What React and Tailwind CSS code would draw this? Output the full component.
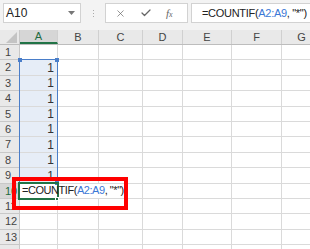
import { X, Check } from "lucide-react";

const cols = [
  { key: "A", w: "w-[38px]" },
  { key: "B", w: "w-[41px]" },
  { key: "C", w: "w-[44px]" },
  { key: "D", w: "w-[40px]" },
  { key: "E", w: "w-[49px]" },
  { key: "F", w: "w-[50px]" },
  { key: "G", w: "w-[40px]" },
];

const rows = [
  { n: 1, h: "h-[15px]" },
  { n: 2, h: "h-[16px]" },
  { n: 3, h: "h-[15px]" },
  { n: 4, h: "h-[16px]" },
  { n: 5, h: "h-[15px]" },
  { n: 6, h: "h-[15px]" },
  { n: 7, h: "h-[16px]" },
  { n: 8, h: "h-[15px]" },
  { n: 9, h: "h-[16px]" },
  { n: 10, h: "h-[15px]" },
  { n: 11, h: "h-[15px]" },
  { n: 12, h: "h-[16px]" },
  { n: 13, h: "h-[15px]" },
  { n: 14, h: "h-[15px]" },
];

function Formula({ className }) {
  return (
    <span className={"whitespace-nowrap text-[#222] " + className}>
      =COUNTIF(<span className="text-[#3b78d6]">A2:A9</span>, "*")
    </span>
  );
}

function Cell({ col, row }) {
  const inRange = col.key === "A" && row.n >= 2 && row.n <= 9;
  const overflow = row.n === 10 && (col.key === "A" || col.key === "B");
  return (
    <div
      className={`${col.w} shrink-0 border-b border-[#dadada] ${
        overflow ? "" : "border-r"
      } ${inRange ? "bg-[#e6edf7]" : "bg-white"} relative flex items-end justify-end pr-[3px]`}
    >
      {inRange && <span className="text-[12px] leading-[14px] text-[#333]">1</span>}
      {col.key === "A" && row.n === 10 && (
        <Formula className="absolute z-10 left-[2px] bottom-[1px] leading-[14px] text-[11px] tracking-[-0.45px]" />
      )}
    </div>
  );
}

export default function App() {
  return (
    <div className="relative w-[310px] h-[249px] overflow-hidden bg-white font-['Liberation_Sans',Arial,sans-serif]">
      {/* formula bar */}
      <div className="h-[30px] bg-[#f3f3f3] flex items-start pt-[3px] pl-[3px]">
        <div className="w-[78px] h-[20px] bg-white border border-[#d2d2d2] flex items-center justify-between pl-[2px] pr-[5px]">
          <span className="text-[12px] text-[#222]">A10</span>
          <svg width="7" height="4" viewBox="0 0 7 4">
            <path d="M0 0h7L3.5 4z" fill="#777" />
          </svg>
        </div>
        <div className="w-[24px] h-[20px] flex flex-col items-center justify-center gap-[2px]">
          <span className="w-[1px] h-[1px] bg-[#aaa]" />
          <span className="w-[1px] h-[1px] bg-[#aaa]" />
          <span className="w-[1px] h-[1px] bg-[#aaa]" />
        </div>
        <div className="w-[83px] h-[20px] bg-white border border-[#d2d2d2] flex items-center pl-[9px] gap-[14px]">
          <X size={11} strokeWidth={1.5} className="text-[#666]" />
          <Check size={12} strokeWidth={2.5} className="text-[#666]" />
          <span className="font-['Liberation_Serif',serif] italic text-[11px] text-[#666]">
            f<span className="text-[8px]">x</span>
          </span>
        </div>
        <div className="ml-[3px] flex-1 h-[20px] bg-white border border-[#d2d2d2] border-r-0 flex items-center pl-[10px]">
          <Formula className="text-[11px] tracking-[-0.3px]" />
        </div>
      </div>

      {/* column headers */}
      <div className="flex h-[15px] bg-[#e9e9e9] border-b border-[#bdbdbd]">
        <div className="w-[20px] shrink-0 border-r border-[#c8c8c8] relative">
          <svg className="absolute right-[2px] bottom-[1px]" width="11" height="11" viewBox="0 0 11 11">
            <path d="M11 0v11H0z" fill="#c4c4c4" />
          </svg>
        </div>
        {cols.map((c) => (
          <div
            key={c.key}
            className={`${c.w} shrink-0 border-r border-[#d0d0d0] flex items-center justify-center text-[11px] leading-none ${
              c.key === "A"
                ? "bg-[#d6d6d6] text-[#1e6b41] border-b-2 border-b-[#217346]"
                : "text-[#444]"
            }`}
          >
            {c.key}
          </div>
        ))}
      </div>

      {/* rows */}
      {rows.map((r) => (
        <div key={r.n} className={`flex ${r.h}`}>
          <div
            className={`w-[20px] shrink-0 border-r border-b border-[#c8c8c8] flex items-center pl-[5px] text-[11px] leading-none ${
              r.n === 10 ? "bg-[#d6d6d6] text-[#1e6b41]" : "bg-[#e9e9e9] text-[#444]"
            }`}
          >
            {r.n < 14 ? r.n : ""}
          </div>
          {cols.map((c) => (
            <Cell key={c.key} col={c} row={r} />
          ))}
        </div>
      ))}

      {/* referenced range A2:A9 */}
      <div className="absolute left-[19px] top-[59px] w-[39px] h-[125px] border border-[#4a7ec9] pointer-events-none" />
      <div className="absolute left-[18px] top-[58px] w-[4px] h-[4px] bg-[#4a7ec9]" />
      <div className="absolute left-[55px] top-[58px] w-[4px] h-[4px] bg-[#4a7ec9]" />
      <div className="absolute left-[55px] top-[181px] w-[4px] h-[4px] bg-[#4a7ec9]" />

      {/* active cell A10 */}
      <div className="absolute left-[18px] top-[182px] w-[41px] h-[18px] border-2 border-[#217346] pointer-events-none" />
      <div className="absolute left-[55px] top-[197px] w-[4px] h-[4px] bg-[#217346] border border-white" />

      {/* callout */}
      <div className="absolute left-[12px] top-[177px] w-[116px] h-[33px] border-4 border-[#ff0000]" />
    </div>
  );
}
